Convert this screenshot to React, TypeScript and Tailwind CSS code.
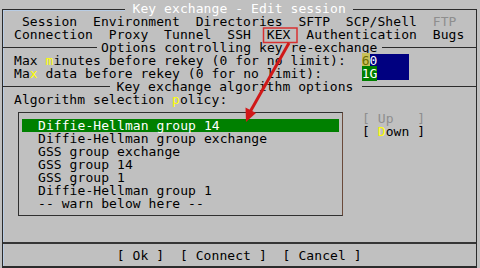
const mono =
  "font-['DejaVu_Sans_Mono','Liberation_Mono',monospace] text-[13px] leading-[13px] tracking-[0.074px]";

function Key({ c }: { c: string }) {
  return <span className="text-[#ffff00]">{c}</span>;
}

function Line() {
  return <div className="h-px bg-[#2b2b2b]" />;
}

const algorithms = [
  'Diffie-Hellman group 14',
  'Diffie-Hellman group exchange',
  'GSS group exchange',
  'GSS group 14',
  'GSS group 1',
  'Diffie-Hellman group 1',
  '-- warn below here --',
];

export default function App() {
  return (
    <div className={`relative w-[480px] h-[268px] overflow-hidden bg-[#c0c0c0] text-black pt-[2px] pl-[2px] pr-[3px] ${mono}`}>
      {/* title row */}
      <div className="h-[13px] flex items-end">
        <div className="w-[123px] h-[6px] border-t border-l border-[#2b2b2b] shadow-[inset_1px_1px_0_#b8cce4]" />
        <div className="ml-[7.5px] self-center whitespace-pre text-white">Key exchange - Edit session</div>
        <div className="ml-[7px] flex-1 h-[6px] border-t border-r border-[#2b2b2b]" />
      </div>

      {/* frame body */}
      <div className="h-[253px] border-x border-b-2 border-[#2b2b2b] shadow-[inset_1px_0_0_#b8cce4]">
        <div className="h-[13px] pl-[11px] whitespace-pre">
          {' Session  Environment  Directories  SFTP  SCP/Shell  '}
          <span className="text-[#8e8e8e]">FTP</span>
        </div>
        <div className="h-[13px] pl-[11px] whitespace-pre">
          Connection  Proxy  Tunnel  SSH  KEX  Authentication  Bugs
        </div>

        <div className="h-[13px] flex items-center">
          <div className="w-[94px]"><Line /></div>
          <div className="ml-[4px] whitespace-pre">Options controlling key re-exchange</div>
          <div className="ml-[4px] flex-1"><Line /></div>
        </div>

        <div className="h-[13px] pl-[11px] whitespace-pre">
          {'Max '}
          <Key c="m" />
          {'inutes before rekey (0 for no limit):  '}
          <span className="inline-block align-top w-[47px] h-[13px] bg-[#000080] text-white">
            <span className="bg-[#c8c058] text-[#6e6e00]">6</span>0
          </span>
        </div>
        <div className="h-[13px] pl-[11px] whitespace-pre">
          {'Ma'}
          <Key c="x" />
          {' data before rekey (0 for no limit):     '}
          <span className="inline-block align-top w-[47px] h-[13px] bg-[#000080] text-white">
            <span className="bg-[#008000]">1G</span>
          </span>
        </div>

        <div className="h-[13px] flex items-center">
          <div className="w-[107px]"><Line /></div>
          <div className="ml-[6.5px] whitespace-pre">Key exchange algorithm options</div>
          <div className="ml-[8px] flex-1"><Line /></div>
        </div>

        <div className="h-[13px] pl-[11px] whitespace-pre">
          {'Algorithm selection '}
          <Key c="p" />
          {'olicy:'}
        </div>

        <div className="h-[117px] flex items-start">
          <div className="ml-[15px] mt-[6px] w-[325px] border border-[#303030] border-r-[#6a4a3a] pt-[6px] pb-[5px] px-[3px]">
            {algorithms.map((a, i) => (
              <div
                key={a}
                className={`h-[13px] pl-[16px] whitespace-pre ${i === 0 ? 'bg-[#008000] text-white' : ''}`}
              >
                {a}
              </div>
            ))}
          </div>
          <div className="ml-[19px] mt-[6px]">
            <div className="h-[13px] whitespace-pre text-[#8e8e8e]">[ Up   ]</div>
            <div className="h-[13px] whitespace-pre">
              {'[ '}
              <Key c="D" />
              {'own ]'}
            </div>
          </div>
        </div>

        <div className="h-[13px]" />
        <div className="h-[13px] flex items-center">
          <div className="w-full h-[2px] bg-[#353535]" />
        </div>
        <div className="h-[13px] pl-[11px] whitespace-pre">
          {'             [ Ok ]  [ Connect ]  [ Cancel ]'}
        </div>
      </div>

      {/* annotation overlay */}
      <svg className="absolute inset-0 pointer-events-none" width="480" height="268" viewBox="0 0 480 268">
        <rect x="263.5" y="28" width="33.5" height="14.5" fill="none" stroke="#d83030" strokeWidth="1.5" />
        <line x1="289" y1="43" x2="250" y2="112" stroke="#d01818" strokeWidth="3" />
        <polygon points="246,122 256,113 245.5,107.5" fill="#d01818" />
      </svg>
    </div>
  );
}
